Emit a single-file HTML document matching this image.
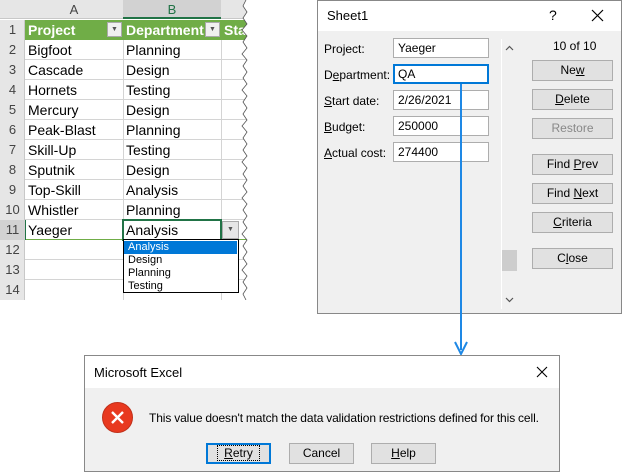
<!DOCTYPE html>
<html><head><style>
*{margin:0;padding:0;box-sizing:border-box}
body{width:622px;height:472px;background:#fff;position:relative;overflow:hidden;font-family:"Liberation Sans",sans-serif;}
.a{position:absolute}
.cell{position:absolute;font-size:14px;color:#000;line-height:20px;white-space:nowrap}
.rn{position:absolute;left:0;width:25px;text-align:center;font-size:13px;color:#444;line-height:20px}
.hl{position:absolute;height:1px;background:#d4d4d4}
.vl{position:absolute;width:1px;background:#d4d4d4}
.lbl{position:absolute;left:324px;font-size:12px;color:#000}
.fld{position:absolute;left:393px;width:96px;height:20px;background:#fff;border:1px solid #adadad;font-size:12px;line-height:18px;padding-left:4px}
.btn{position:absolute;left:532px;width:81px;height:21px;background:#e1e1e1;border:1px solid #adadad;font-size:12px;text-align:center;line-height:19px;color:#000}
.eb{position:absolute;top:443px;width:65px;height:21px;background:#e1e1e1;border:1px solid #adadad;font-size:12px;text-align:center;line-height:19px}
u{text-decoration:underline}
</style></head><body>
<!-- spreadsheet -->
<div class="a" style="left:0;top:0;width:250px;height:19px;background:#e6e6e6;border-bottom:1px solid #c8c8c8"></div>
<div class="a" style="left:123px;top:0;width:98px;height:19px;background:#d2d2d2;border-bottom:2px solid #217346"></div>
<div class="a" style="left:25px;top:0;width:98px;text-align:center;font-size:13px;line-height:19px;color:#444">A</div>
<div class="a" style="left:123px;top:0;width:98px;text-align:center;font-size:13px;line-height:19px;color:#217346">B</div>
<div class="a" style="left:0;top:20px;width:25px;height:280px;background:#e6e6e6;border-right:1px solid #c8c8c8"></div>
<div class="a" style="left:0;top:220px;width:25px;height:20px;background:#d2d2d2"></div>
<div class="a" style="left:25px;top:20px;width:225px;height:20px;background:#70ad47"></div>
<div class="vl" style="left:123px;top:40px;height:260px"></div>
<div class="vl" style="left:221px;top:40px;height:260px"></div>
<div class="hl" style="left:25px;top:59px;width:225px"></div><div class="hl" style="left:25px;top:79px;width:225px"></div>
<div class="hl" style="left:25px;top:99px;width:225px"></div><div class="hl" style="left:25px;top:119px;width:225px"></div>
<div class="hl" style="left:25px;top:139px;width:225px"></div><div class="hl" style="left:25px;top:159px;width:225px"></div>
<div class="hl" style="left:25px;top:179px;width:225px"></div><div class="hl" style="left:25px;top:199px;width:225px"></div>
<div class="hl" style="left:25px;top:219px;width:225px"></div><div class="hl" style="left:25px;top:239px;width:225px;background:#70ad47"></div>
<div class="hl" style="left:25px;top:259px;width:225px"></div><div class="hl" style="left:25px;top:279px;width:225px"></div>
<div class="a" style="left:25px;top:220px;width:1px;height:20px;background:#217346"></div>
<div class="cell" style="left:28px;top:20px;color:#fff;font-weight:bold">Project</div>
<div class="cell" style="left:126px;top:20px;color:#fff;font-weight:bold">Department</div>
<div class="cell" style="left:224px;top:20px;color:#fff;font-weight:bold">Sta</div>
<div class="a" style="left:107px;top:22px;width:15px;height:15px;background:#f0f0f0;border:1px solid #aaa;font-size:7px;text-align:center;line-height:13px;color:#555">▼</div>
<div class="a" style="left:205px;top:22px;width:15px;height:15px;background:#f0f0f0;border:1px solid #aaa;font-size:7px;text-align:center;line-height:13px;color:#555">▼</div>
<div class="rn" style="top:20px">1</div><div class="rn" style="top:40px">2</div><div class="rn" style="top:60px">3</div><div class="rn" style="top:80px">4</div><div class="rn" style="top:100px">5</div><div class="rn" style="top:120px">6</div><div class="rn" style="top:140px">7</div><div class="rn" style="top:160px">8</div><div class="rn" style="top:180px">9</div><div class="rn" style="top:200px">10</div><div class="rn" style="top:220px">11</div><div class="rn" style="top:240px">12</div><div class="rn" style="top:260px">13</div><div class="rn" style="top:280px">14</div>
<div class="cell" style="left:28px;top:40px">Bigfoot</div><div class="cell" style="left:126px;top:40px">Planning</div>
<div class="cell" style="left:28px;top:60px">Cascade</div><div class="cell" style="left:126px;top:60px">Design</div>
<div class="cell" style="left:28px;top:80px">Hornets</div><div class="cell" style="left:126px;top:80px">Testing</div>
<div class="cell" style="left:28px;top:100px">Mercury</div><div class="cell" style="left:126px;top:100px">Design</div>
<div class="cell" style="left:28px;top:120px">Peak-Blast</div><div class="cell" style="left:126px;top:120px">Planning</div>
<div class="cell" style="left:28px;top:140px">Skill-Up</div><div class="cell" style="left:126px;top:140px">Testing</div>
<div class="cell" style="left:28px;top:160px">Sputnik</div><div class="cell" style="left:126px;top:160px">Design</div>
<div class="cell" style="left:28px;top:180px">Top-Skill</div><div class="cell" style="left:126px;top:180px">Analysis</div>
<div class="cell" style="left:28px;top:200px">Whistler</div><div class="cell" style="left:126px;top:200px">Planning</div>
<div class="cell" style="left:28px;top:220px">Yaeger</div>
<div class="a" style="left:122px;top:219px;width:100px;height:22px;border:2px solid #217346;background:#fff"></div>
<div class="cell" style="left:126px;top:220px">Analysis</div>
<div class="a" style="left:222px;top:221px;width:17px;height:18px;background:#e6e6e6;border:1px solid #aaa;font-size:7px;text-align:center;line-height:16px;color:#555">▼</div>
<div class="a" style="left:123px;top:239px;width:116px;height:54px;background:#fff;border:1px solid #000"></div>
<div class="a" style="left:124px;top:241px;width:113px;height:13px;background:#0078d7"></div>
<div class="a" style="left:128px;top:241px;font-size:11px;line-height:13px;color:#fff">Analysis</div>
<div class="a" style="left:128px;top:254px;font-size:11px;line-height:13px">Design</div>
<div class="a" style="left:128px;top:267px;font-size:11px;line-height:13px">Planning</div>
<div class="a" style="left:128px;top:280px;font-size:11px;line-height:13px">Testing</div>
<svg class="a" style="left:238px;top:0" width="20" height="300"><polygon fill="#fff" points="8,0 5,6 9,12 5,18 9,24 4,30 9,36 5,42 9,48 4,54 9,60 5,66 9,72 5,78 9,84 4,90 9,96 5,102 9,108 5,114 9,120 4,126 9,132 5,138 9,144 5,150 9,156 4,162 9,168 5,174 9,180 5,186 9,192 4,198 9,204 5,210 9,216 5,222 9,228 4,234 9,240 5,246 9,252 5,258 9,264 4,270 9,276 5,282 9,288 5,294 8,300 20,300 20,0"/><polyline fill="none" stroke="#555" stroke-width="0.8" points="8,0 5,6 9,12 5,18 9,24 4,30 9,36 5,42 9,48 4,54 9,60 5,66 9,72 5,78 9,84 4,90 9,96 5,102 9,108 5,114 9,120 4,126 9,132 5,138 9,144 5,150 9,156 4,162 9,168 5,174 9,180 5,186 9,192 4,198 9,204 5,210 9,216 5,222 9,228 4,234 9,240 5,246 9,252 5,258 9,264 4,270 9,276 5,282 9,288 5,294 8,300"/></svg>
<!-- Sheet1 dialog -->
<div class="a" style="left:317px;top:0;width:305px;height:314px;background:#f0f0f0;border:1px solid #888"></div>
<div class="a" style="left:318px;top:1px;width:303px;height:30px;background:#fff"></div>
<div class="a" style="left:327px;top:8px;font-size:13px">Sheet1</div>
<div class="a" style="left:549px;top:7px;font-size:14px">?</div>
<svg class="a" style="left:591px;top:9px" width="13" height="13"><path d="M1 1L12 12M12 1L1 12" stroke="#000" stroke-width="1.2"/></svg>
<div class="lbl" style="top:42px">Pro<u>j</u>ect:</div>
<div class="lbl" style="top:68px">D<u>e</u>partment:</div>
<div class="lbl" style="top:94px"><u>S</u>tart date:</div>
<div class="lbl" style="top:120px"><u>B</u>udget:</div>
<div class="lbl" style="top:146px"><u>A</u>ctual cost:</div>
<div class="fld" style="top:38px">Yaeger</div>
<div class="fld" style="top:64px;border:2px solid #0078d7;padding-left:3px;line-height:16px">QA</div>
<div class="fld" style="top:90px">2/26/2021</div>
<div class="fld" style="top:116px">250000</div>
<div class="fld" style="top:142px">274400</div>
<div class="a" style="left:501px;top:39px;width:1px;height:270px;background:#fff"></div>
<div class="a" style="left:502px;top:250px;width:15px;height:21px;background:#cdcdcd"></div>
<svg class="a" style="left:505px;top:45px" width="9" height="6"><path d="M1 5L4.5 1.5L8 5" fill="none" stroke="#555" stroke-width="1.2"/></svg>
<svg class="a" style="left:505px;top:297px" width="9" height="6"><path d="M1 1L4.5 4.5L8 1" fill="none" stroke="#555" stroke-width="1.2"/></svg>
<div class="a" style="left:553px;top:39px;font-size:12px">10 of 10</div>
<div class="btn" style="top:60px">Ne<u>w</u></div>
<div class="btn" style="top:89px"><u>D</u>elete</div>
<div class="btn" style="top:118px;color:#888">Restore</div>
<div class="btn" style="top:154px">Find <u>P</u>rev</div>
<div class="btn" style="top:183px">Find <u>N</u>ext</div>
<div class="btn" style="top:212px"><u>C</u>riteria</div>
<div class="btn" style="top:248px">C<u>l</u>ose</div>
<!-- arrow -->
<div class="a" style="left:460px;top:84px;width:2px;height:266px;background:#1e88e5"></div>
<svg class="a" style="left:454px;top:338px" width="14" height="18"><polyline points="1,4 7,16 13,4" fill="none" stroke="#1e88e5" stroke-width="2"/></svg>
<!-- error dialog -->
<div class="a" style="left:84px;top:355px;width:476px;height:117px;background:#f0f0f0;border:1px solid #888"></div>
<div class="a" style="left:85px;top:356px;width:474px;height:32px;background:#fff"></div>
<div class="a" style="left:94px;top:365px;font-size:13px">Microsoft Excel</div>
<svg class="a" style="left:536px;top:366px" width="12" height="12"><path d="M1 1L11 11M11 1L1 11" stroke="#000" stroke-width="1.1"/></svg>
<svg class="a" style="left:102px;top:402px" width="31" height="31"><circle cx="15.5" cy="15.5" r="15" fill="#e8391f" stroke="#c0301a"/><path d="M10 10L21 21M21 10L10 21" stroke="#fff" stroke-width="2.4"/></svg>
<div class="a" style="left:149px;top:411px;font-size:12px;letter-spacing:-0.1px;word-spacing:-0.3px">This value doesn't match the data validation restrictions defined for this cell.</div>
<div class="eb" style="left:206px;border:2px solid #0078d7;line-height:17px"><span style="outline:1px dotted #000;padding:0 6px"><u>R</u>etry</span></div>
<div class="eb" style="left:289px">Cancel</div>
<div class="eb" style="left:371px"><u>H</u>elp</div>
</body></html>
